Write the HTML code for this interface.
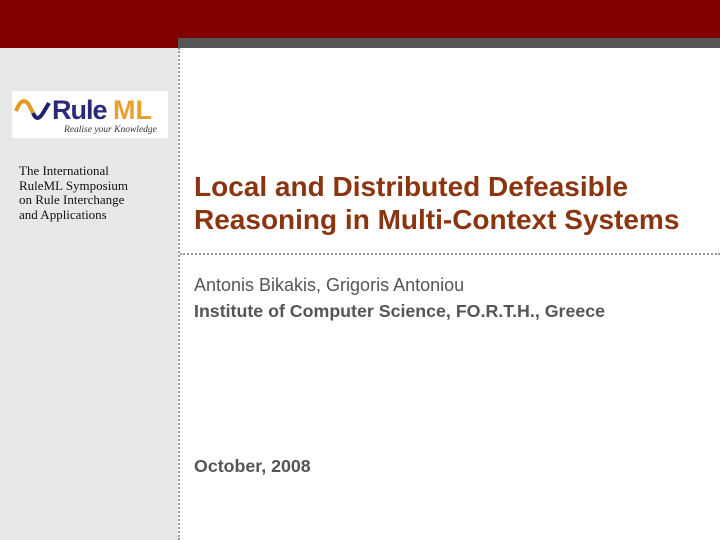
<!DOCTYPE html>
<html><head><meta charset="utf-8"><style>
body{margin:0;width:720px;height:540px;position:relative;overflow:hidden;background:#fff;font-family:"Liberation Sans",Arial,sans-serif}
div{position:absolute}
.t{white-space:nowrap}
</style></head><body>
<div style="left:0;top:0;width:720px;height:48px;background:#800000"></div>
<div style="left:178px;top:38px;width:542px;height:10px;background:#555"></div>
<div style="left:0;top:48px;width:178px;height:492px;background:#e8e8e8"></div>
<div style="left:178px;top:48px;width:0;height:492px;border-left:2px dotted #999"></div>
<div style="left:12px;top:91px;width:156px;height:47px;background:#fff">
<svg width="156" height="47" viewBox="0 0 156 47">
<path d="M4 20 Q10 4 17 14 L21 22" stroke="#e8961e" stroke-width="4" fill="none"/>
<path d="M21 22 Q25 32 31 22 L37 12" stroke="#1e1e6e" stroke-width="4" fill="none"/>
<text x="40" y="28" font-family="Liberation Sans" font-weight="bold" font-size="27" fill="#2a2a7a" letter-spacing="-1">Rule</text>
<text x="101" y="28" font-family="Liberation Sans" font-weight="bold" font-size="27" fill="#e8a030">ML</text>
<text x="52" y="41" font-family="Liberation Serif" font-style="italic" font-size="9.5" fill="#333">Realise your Knowledge</text>
</svg></div>
<div class="t" style="left:19px;top:164px;font-family:'Liberation Serif',serif;font-size:13px;line-height:14.5px;color:#111">The International<br>RuleML Symposium<br>on Rule Interchange<br>and Applications</div>
<div class="t" style="left:194px;top:170px;font-size:28px;font-weight:bold;line-height:33px;color:#8b3510">Local and Distributed Defeasible<br>Reasoning in Multi-Context Systems</div>
<div style="left:180px;top:253px;width:540px;border-top:2px dotted #999"></div>
<div class="t" style="left:194px;top:275px;font-size:18px;color:#555">Antonis Bikakis, Grigoris Antoniou</div>
<div class="t" style="left:194px;top:301px;font-size:17.8px;font-weight:bold;color:#555">Institute of Computer Science, FO.R.T.H., Greece</div>
<div class="t" style="left:194px;top:456px;font-size:17.8px;font-weight:bold;color:#555">October, 2008</div>
</body></html>
